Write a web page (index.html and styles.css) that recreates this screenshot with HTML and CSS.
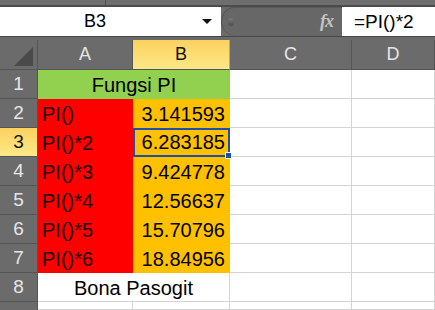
FILE: index.html
```html
<!DOCTYPE html>
<html lang="id">
<head>
  <meta charset="UTF-8" />
  <title>Fungsi PI</title>
  <link rel="stylesheet" href="styles.css">
</head>
<body>
  <div class="atas"><span class="garis"></span></div>

  <div class="fbar">
    <div class="namebox">
      <span class="nama">B3</span>
      <span class="panah"></span>
    </div>
    <div class="pil">
      <span class="titik"></span>
      <span class="fx">fx</span>
    </div>
    <div class="rumus">=PI()*2</div>
  </div>

  <div class="pemisah"></div>

  <div class="lembar">
    <!-- header kolom -->
    <div class="pojok"><span class="segitiga"></span></div>
    <div class="kol">A</div>
    <div class="kol pilih">B</div>
    <div class="kol">C</div>
    <div class="kol">D</div>

    <!-- baris 1 -->
    <div class="brs">1</div>
    <div class="sel hijau gabung tengah">Fungsi PI</div>
    <div class="sel kosong"></div>
    <div class="sel kosong"></div>

    <div class="brs">2</div>
    <div class="sel merah">PI()</div>
    <div class="sel oranye kanan">3.141593</div>
    <div class="sel kosong"></div>
    <div class="sel kosong"></div>

    <div class="brs pilih">3</div>
    <div class="sel merah">PI()*2</div>
    <div class="sel oranye kanan aktif">6.283185<span class="pegangan"></span></div>
    <div class="sel kosong"></div>
    <div class="sel kosong"></div>

    <div class="brs">4</div>
    <div class="sel merah">PI()*3</div>
    <div class="sel oranye kanan">9.424778</div>
    <div class="sel kosong"></div>
    <div class="sel kosong"></div>

    <div class="brs">5</div>
    <div class="sel merah">PI()*4</div>
    <div class="sel oranye kanan">12.56637</div>
    <div class="sel kosong"></div>
    <div class="sel kosong"></div>

    <div class="brs">6</div>
    <div class="sel merah">PI()*5</div>
    <div class="sel oranye kanan">15.70796</div>
    <div class="sel kosong"></div>
    <div class="sel kosong"></div>

    <div class="brs">7</div>
    <div class="sel merah">PI()*6</div>
    <div class="sel oranye kanan">18.84956</div>
    <div class="sel kosong"></div>
    <div class="sel kosong"></div>

    <div class="brs">8</div>
    <div class="sel kosong gabung tengah">Bona Pasogit</div>
    <div class="sel kosong"></div>
    <div class="sel kosong"></div>

    <div class="brs sisa"></div>
    <div class="sel kosong sisa"></div>
    <div class="sel kosong sisa"></div>
    <div class="sel kosong sisa"></div>
    <div class="sel kosong sisa"></div>
  </div>
</body>
</html>
```

FILE: styles.css
```css
body {
  margin: 0; padding: 0;
  font-family: 'Liberation Sans', Arial, sans-serif;
  background: #6b6b6b;
  width: 435px;
  height: 310px;
  overflow: hidden;
}

/* strip paling atas */
.atas {
  height: 5px;
  background: #6e6e6e;
  border-bottom: 2px solid #4b4b4b;
  display: flex;
}
.atas .garis {
  margin-left: 105px;
  width: 1px;
  background: #4f4f4f;
}

/* formula bar */
.fbar {
  display: flex;
  height: 29px;
}
.namebox {
  width: 221px;
  background: #fff;
  display: flex;
  align-items: center;
}
.nama {
  width: 190px;
  text-align: center;
  font-size: 18px;
  color: #000;
}
.panah {
  margin-left: 12px;
  width: 0; height: 0;
  border-left: 5px solid transparent;
  border-right: 5px solid transparent;
  border-top: 5px solid #111;
}
.pil {
  width: 121px;
  background: #676767;
  border-radius: 15px 0 0 15px;
  box-shadow: inset 1px 0 0 #555, inset 0 1px 0 #5a5a5a;
  display: flex;
  align-items: center;
  justify-content: space-between;
  padding: 0 9px 0 7px;
  box-sizing: border-box;
}
.titik {
  width: 6px; height: 8px;
  border-radius: 3px;
  background: linear-gradient(#7a7a7a, #4e4e4e);
}
.fx {
  font-family: 'Liberation Serif', serif;
  font-style: italic;
  font-weight: bold;
  font-size: 18px;
  color: #c4c4c4;
  letter-spacing: -1px;
}
.rumus {
  flex: 1;
  background: #fff;
  padding-left: 12px;
  font-size: 19px;
  line-height: 29px;
  color: #000;
}

.pemisah {
  height: 3px;
  background: #6b6b6b;
  border-top: 1px solid #484848;
}

/* lembar kerja */
.lembar {
  display: grid;
  grid-template-columns: 38px 95px 97px 122px 83px;
  grid-template-rows: 30px repeat(8, 29px) 8px;
}
.pojok {
  background: #6b6b6b;
  border-right: 1px solid #555;
  border-bottom: 1px solid #555;
  display: flex;
  justify-content: flex-end;
  align-items: flex-end;
  padding: 0 4px 3px 0;
}
.segitiga {
  width: 19px; height: 19px;
  background: #4a4a4a;
  clip-path: polygon(100% 0, 100% 100%, 0 100%);
}
.kol {
  background: #6b6b6b;
  border-right: 1px solid #555;
  border-bottom: 1px solid #555;
  color: #e6e6e6;
  font-size: 18px;
  display: flex;
  align-items: center;
  justify-content: center;
}
.kol.pilih {
  background: linear-gradient(#fbd25f, #fde887);
  color: #111;
  border-right-color: #c9a84b;
}
.brs {
  background: #6b6b6b;
  border-right: 1px solid #555;
  border-bottom: 1px solid #555;
  color: #e6e6e6;
  font-size: 19px;
  display: flex;
  align-items: center;
  justify-content: center;
}
.brs.pilih {
  background: linear-gradient(#fbd25f, #fde887);
  color: #111;
}
.sisa { border-bottom: none; }

.sel {
  font-size: 20px;
  color: #000;
  line-height: 28px;
  padding: 1px 4px 0;
  white-space: nowrap;
  box-sizing: border-box;
}
.kosong {
  background: #fff;
  border-right: 1px solid #d4d4d4;
  border-bottom: 1px solid #d4d4d4;
}
.hijau { background: #92d050; }
.merah { background: #ff0000; color: #1a0000; }
.oranye { background: #ffc000; }
.gabung { grid-column: span 2; }
.tengah { text-align: center; }
.kanan { text-align: right; padding-right: 5px; }

.aktif {
  border: 2px solid #1c4fb0;
  line-height: 25px;
  padding: 0 3px 0 0;
  position: relative;
}
.pegangan {
  position: absolute;
  right: -4px;
  bottom: -4px;
  width: 5px; height: 5px;
  background: #1c4fb0;
  border: 1px solid #fff;
}
```
